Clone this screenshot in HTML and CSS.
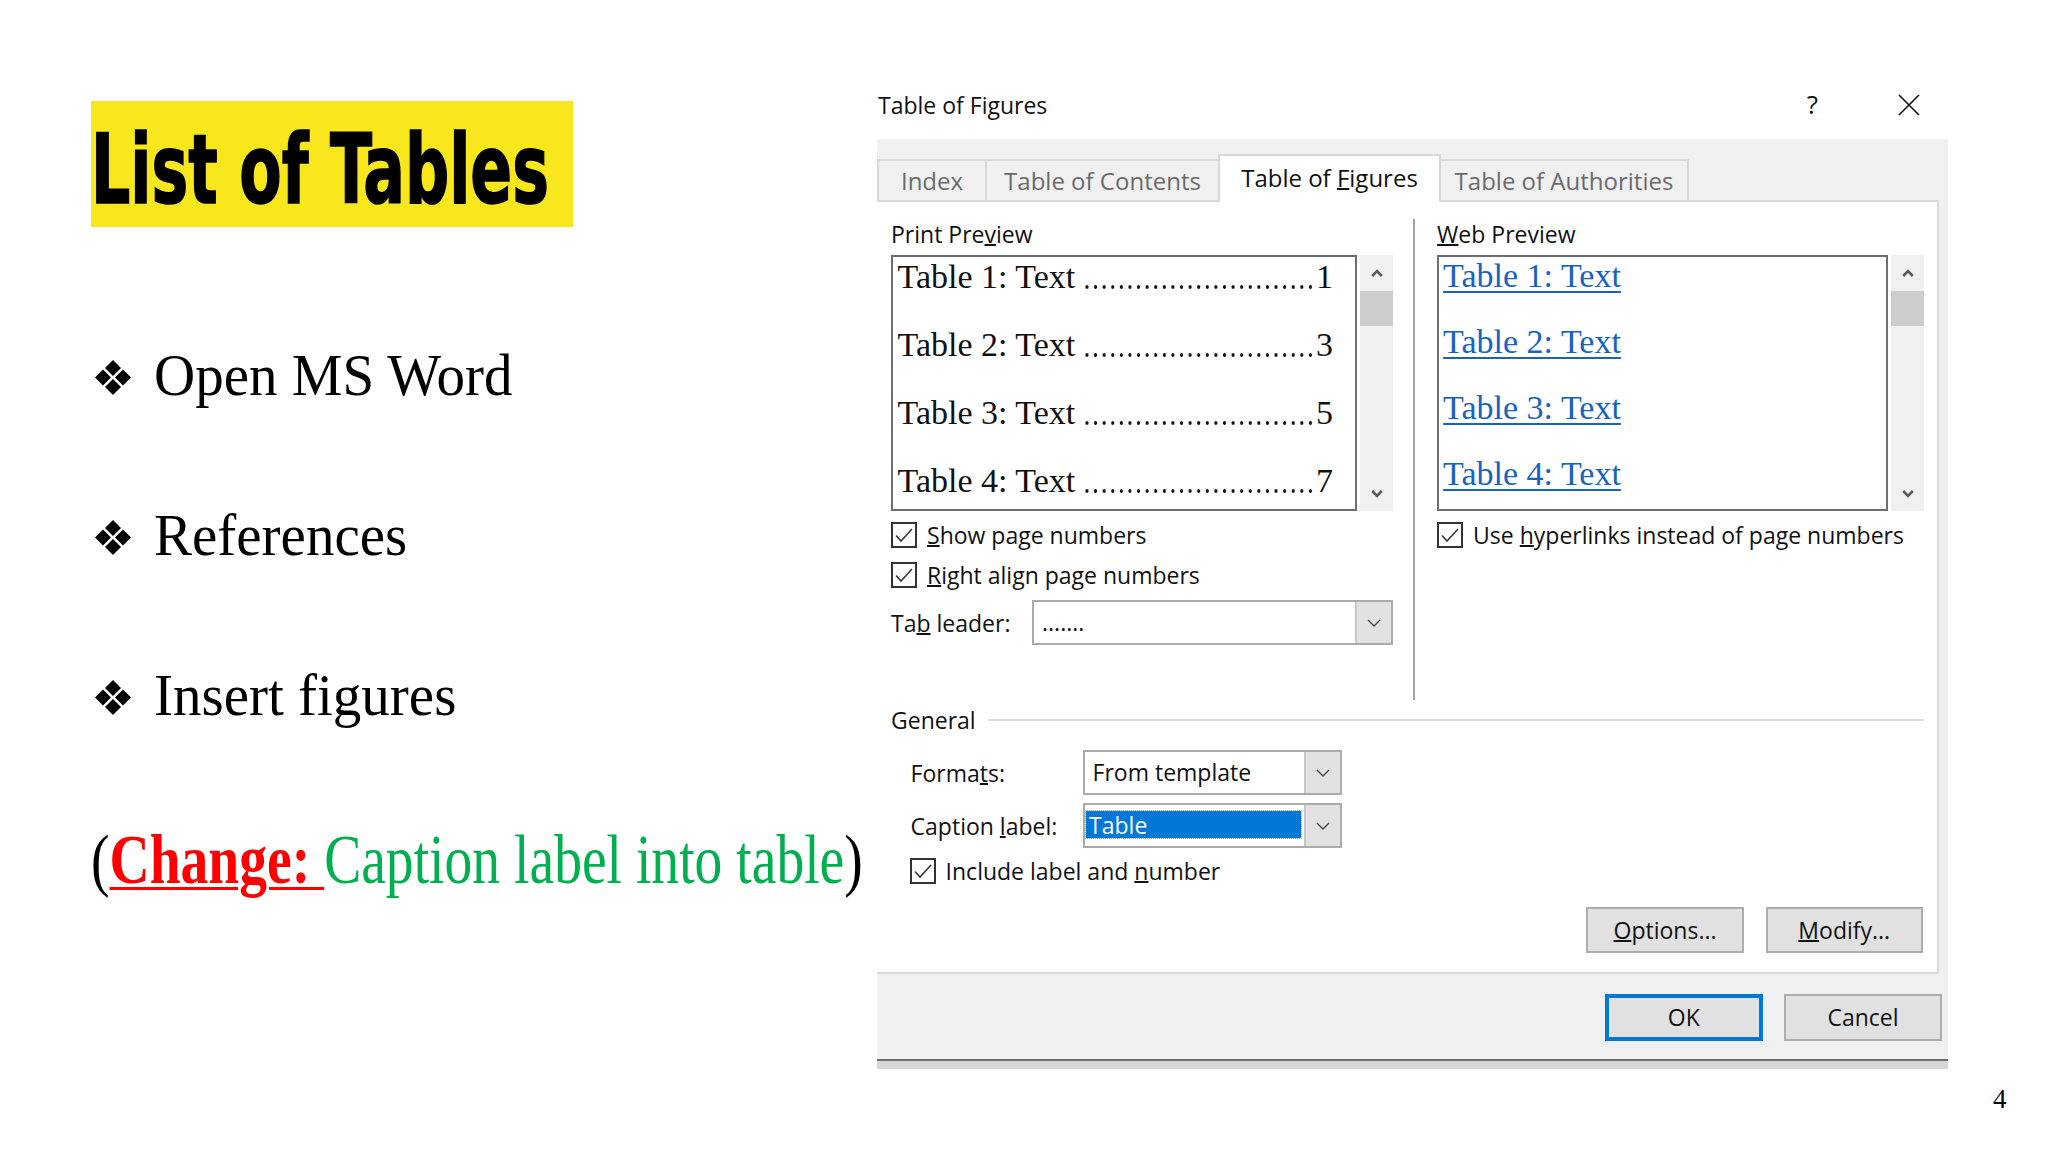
FILE: index.html
```html
<!DOCTYPE html>
<html lang="en">
<head>
    <meta charset="UTF-8">
    <title>List of Tables</title>
    <link rel="stylesheet" href="styles.css">
</head>
<body>

<svg class="defs" width="0" height="0">
    <symbol id="diamonds" viewBox="0 0 36 35">
        <polygon points="18,0 26,8 18,16 10,8"/>
        <polygon points="8,9.5 16,17.5 8,25.5 0,17.5"/>
        <polygon points="28,9.5 36,17.5 28,25.5 20,17.5"/>
        <polygon points="18,19 26,27 18,35 10,27"/>
    </symbol>
    <symbol id="tick" viewBox="0 0 26 26">
        <rect x="1" y="1" width="24" height="24" fill="#fff" stroke="#333" stroke-width="2"/>
        <path d="M5 13.5l5 5.5 11-12" fill="none" stroke="#3a3a3a" stroke-width="1.6"/>
    </symbol>
    <symbol id="chev-down" viewBox="0 0 14 8">
        <path d="M1 1l6 6 6-6" fill="none" stroke="#444" stroke-width="1.3"/>
    </symbol>
    <symbol id="scroll-up" viewBox="0 0 12 8">
        <path d="M1.2 7L6 2.2 10.8 7" fill="none" stroke="#5a5a5a" stroke-width="2.6"/>
    </symbol>
    <symbol id="scroll-down" viewBox="0 0 12 8">
        <path d="M1.2 1L6 5.8 10.8 1" fill="none" stroke="#5a5a5a" stroke-width="2.6"/>
    </symbol>
</svg>

<div class="slide">

    <div class="notes">
        <h1 class="title"><span>List of Tables</span></h1>

        <ul class="steps">
            <li><svg class="bullet"><use href="#diamonds"/></svg><span class="cond">Open MS Word</span></li>
            <li><svg class="bullet"><use href="#diamonds"/></svg><span class="cond">References</span></li>
            <li><svg class="bullet"><use href="#diamonds"/></svg><span class="cond">Insert figures</span></li>
        </ul>

        <p class="change"><span class="cond">(<span class="hl">Change: </span><span class="note">Caption label into table</span>)</span></p>
    </div>

    <div class="dialog">
        <div class="dlg-titlebar">
            <span class="dlg-title">Table of Figures</span>
            <span class="dlg-help">?</span>
            <svg class="dlg-close" width="22" height="22" viewBox="0 0 22 22"><path d="M1 1L21 21M21 1L1 21" stroke="#111" stroke-width="1.6"/></svg>
        </div>

        <div class="dlg-body">
            <div class="tabs">
                <div class="tab tab-index">Index</div>
                <div class="tab tab-toc">Table of Contents</div>
                <div class="tab tab-tof active">Table of <u>F</u>igures</div>
                <div class="tab tab-toa">Table of Authorities</div>
            </div>

            <div class="panel">
                <div class="pane-top">
                    <div class="col-print">
                        <div class="group-label">Print Pre<u>v</u>iew</div>
                        <div class="preview">
                            <div class="preview-box print">
                                <div class="toc-row"><span>Table 1: Text</span><span class="leader"></span><span>1</span></div>
                                <div class="toc-row"><span>Table 2: Text</span><span class="leader"></span><span>3</span></div>
                                <div class="toc-row"><span>Table 3: Text</span><span class="leader"></span><span>5</span></div>
                                <div class="toc-row"><span>Table 4: Text</span><span class="leader"></span><span>7</span></div>
                            </div>
                            <div class="scrollbar">
                                <div class="scroll-btn up"><svg width="12" height="8"><use href="#scroll-up"/></svg></div>
                                <div class="scroll-thumb"></div>
                                <div class="scroll-track"></div>
                                <div class="scroll-btn down"><svg width="12" height="8"><use href="#scroll-down"/></svg></div>
                            </div>
                        </div>

                        <div class="check first"><svg width="26" height="26"><use href="#tick"/></svg><span><u>S</u>how page numbers</span></div>
                        <div class="check"><svg width="26" height="26"><use href="#tick"/></svg><span><u>R</u>ight align page numbers</span></div>

                        <div class="leader-row">
                            <label>Ta<u>b</u> leader:</label>
                            <div class="select select-leader">
                                <span class="select-value">.......</span>
                                <span class="select-arrow"><svg width="14" height="8"><use href="#chev-down"/></svg></span>
                            </div>
                        </div>
                    </div>

                    <div class="vsep"></div>

                    <div class="col-web">
                        <div class="group-label"><u>W</u>eb Preview</div>
                        <div class="preview">
                            <div class="preview-box web">
                                <div class="toc-row"><a href="#">Table 1: Text</a></div>
                                <div class="toc-row"><a href="#">Table 2: Text</a></div>
                                <div class="toc-row"><a href="#">Table 3: Text</a></div>
                                <div class="toc-row"><a href="#">Table 4: Text</a></div>
                            </div>
                            <div class="scrollbar">
                                <div class="scroll-btn up"><svg width="12" height="8"><use href="#scroll-up"/></svg></div>
                                <div class="scroll-thumb"></div>
                                <div class="scroll-track"></div>
                                <div class="scroll-btn down"><svg width="12" height="8"><use href="#scroll-down"/></svg></div>
                            </div>
                        </div>

                        <div class="check first"><svg width="26" height="26"><use href="#tick"/></svg><span>Use <u>h</u>yperlinks instead of page numbers</span></div>
                    </div>
                </div>

                <div class="general">
                    <span>General</span>
                    <span class="rule"></span>
                </div>

                <div class="field first">
                    <label>Forma<u>t</u>s:</label>
                    <div class="select select-format">
                        <span class="select-value">From template</span>
                        <span class="select-arrow"><svg width="14" height="8"><use href="#chev-down"/></svg></span>
                    </div>
                </div>
                <div class="field">
                    <label>Caption <u>l</u>abel:</label>
                    <div class="select select-format">
                        <span class="select-value picked"><span class="picked-text">Table</span></span>
                        <span class="select-arrow"><svg width="14" height="8"><use href="#chev-down"/></svg></span>
                    </div>
                </div>

                <div class="check include"><svg width="26" height="26"><use href="#tick"/></svg><span>Include label and <u>n</u>umber</span></div>

                <div class="actions">
                    <button class="btn btn-options"><span><u>O</u>ptions...</span></button>
                    <button class="btn btn-modify"><span><u>M</u>odify...</span></button>
                </div>
            </div>

            <div class="dlg-footer">
                <button class="btn btn-ok">OK</button>
                <button class="btn btn-cancel">Cancel</button>
            </div>
        </div>
    </div>

    <span class="page-no">4</span>
</div>

</body>
</html>
```

FILE: styles.css
```css
body {
    margin: 0;
    background: #fff;
    color: #000;
    font-family: "Liberation Serif", "Times New Roman", serif;
}

.defs {
    position: absolute;
    width: 0;
    height: 0;
}

.slide {
    width: 2048px;
    height: 1152px;
    display: flex;
    align-items: flex-start;
    overflow: hidden;
}

/* left side of the slide */

.notes {
    flex: 0 0 877px;
    min-width: 0;
    box-sizing: border-box;
    padding: 101px 0 0 91px;
}

.title {
    width: 482px;
    height: 126px;
    box-sizing: border-box;
    margin: 0;
    padding-top: 21px;
    background: #f8e71c;
    font-family: "DejaVu Sans", sans-serif;
    font-stretch: condensed;
    font-weight: bold;
    font-size: 96px;
    line-height: 96px;
    white-space: nowrap;
}

.title span {
    display: inline-block;
    transform: scaleX(0.715);
    transform-origin: left center;
    -webkit-text-stroke: 1.5px #000;
}

.steps {
    list-style: none;
    margin: 67.7px 0 0;
    padding: 0 0 0 4px;
}

.steps li {
    font-size: 60px;
    line-height: 160px;
    white-space: nowrap;
}

.bullet {
    width: 36px;
    height: 35px;
    margin-right: 23px;
    fill: #000;
}

.cond {
    display: inline-block;
    line-height: 1;
    transform-origin: left center;
}

.steps .cond {
    transform: scaleX(0.95);
}

.change {
    margin: 35.7px 0 0;
    font-size: 70px;
    line-height: 100px;
    white-space: nowrap;
}

.change .cond {
    transform: scaleX(0.794);
}

.change .hl {
    color: #f00;
    font-weight: bold;
    text-decoration: underline;
    text-decoration-thickness: 3px;
    text-underline-offset: 4px;
}

.change .note {
    color: #00b050;
}

.page-no {
    align-self: flex-end;
    margin: 0 41.5px 38.6px auto;
    font-size: 27px;
    line-height: 27px;
}

/* dialog */

.dialog {
    flex: 0 0 1071px;
    margin-top: 80px;
    font-family: "Open Sans", "Noto Sans", sans-serif;
    font-size: 23px;
    color: #111;
}

.dialog u {
    text-decoration-thickness: 1.5px;
}

.dlg-titlebar {
    display: flex;
    height: 58.5px;
}

.dlg-title {
    margin: 14px 0 0 1px;
    font-size: 23px;
    line-height: 23px;
}

.dlg-help {
    margin: 10.9px 0 0 auto;
    font-size: 26px;
    line-height: 26px;
}

.dlg-close {
    margin: 14px 28.5px 0 79.5px;
}

.dlg-body {
    background: #f0f0f0;
    border-bottom: 2px solid #6f6f6f;
    box-shadow: 0 8px 0 #d6d6d6;
}

.tabs {
    display: flex;
    align-items: flex-end;
    padding-top: 15.5px;
}

.tab {
    box-sizing: border-box;
    height: 41.5px;
    margin-right: -2px;
    padding-top: 8.2px;
    border: 2px solid #d9d9d9;
    border-bottom: none;
    text-align: center;
    font-size: 24px;
    line-height: 24px;
    color: #6b6b6b;
    white-space: nowrap;
}

.tab.active {
    position: relative;
    height: 48px;
    margin-bottom: -2px;
    padding-top: 10.1px;
    background: #fff;
    color: #111;
}

.tab-index { width: 110px; }
.tab-toc { width: 235px; }
.tab-tof { width: 223px; }
.tab-toa { width: 250px; }

.panel {
    margin-right: 9.4px;
    padding: 17px 12.6px 18.6px 14px;
    background: #fff;
    border: 2px solid #dadada;
    border-left: none;
}

.pane-top {
    display: flex;
    height: 481px;
}

.col-print {
    width: 502px;
}

.col-web {
    flex: 1;
}

.vsep {
    width: 2px;
    background: #a3a3a3;
    margin: 0 22.5px 0 19.6px;
}

.group-label {
    margin-top: 1.6px;
    height: 26px;
    line-height: 26px;
}

.preview {
    display: flex;
    gap: 3px;
    margin-top: 8px;
    height: 256px;
}

.preview-box {
    flex: 1;
    box-sizing: border-box;
    display: flex;
    flex-direction: column;
    border: 2px solid #6f6f6f;
    background: #fff;
    font-family: "Liberation Serif", "Times New Roman", serif;
    font-size: 34px;
    white-space: nowrap;
    color: #111;
}

.preview-box.print {
    gap: 28px;
    padding: 0 22px 0 4.5px;
    line-height: 40px;
}

.preview-box.web {
    gap: 28px;
    padding: 0 0 0 4px;
    line-height: 38px;
}

.toc-row {
    display: flex;
}

/* dotted tab leader drawn as a repeating dot on the baseline */
.leader {
    flex: 1;
    margin: 0 1px 0 7px;
    background-image: radial-gradient(circle, #111 1.5px, transparent 2px);
    background-size: 8.6px 40px;
    background-position: right 0 top 10px;
    background-repeat: repeat-x;
}

.preview-box a {
    color: #1763c0;
    text-decoration: underline;
    text-decoration-thickness: 2px;
    text-underline-offset: 4px;
}

.scrollbar {
    width: 33px;
    display: flex;
    flex-direction: column;
    background: #f0f0f0;
}

.scroll-btn {
    display: flex;
    align-items: center;
    justify-content: center;
}

.scroll-btn.up { height: 36px; }
.scroll-btn.down { height: 34px; }

.scroll-thumb {
    height: 35px;
    background: #cdcdcd;
}

.scroll-track {
    flex: 1;
}

.check {
    display: flex;
    align-items: center;
    gap: 10px;
    height: 26px;
    line-height: 26px;
    margin-top: 14px;
    white-space: nowrap;
}

.check.first {
    margin-top: 11.2px;
}

.check.include {
    margin: 10px 0 0 18.6px;
}

.check svg {
    flex: 0 0 26px;
}

.leader-row {
    display: flex;
    align-items: center;
    margin-top: 12px;
}

.leader-row label {
    width: 141px;
    line-height: 26px;
}

.select {
    box-sizing: border-box;
    display: flex;
    border: 2px solid #ababab;
    background: #fff;
}

.select-leader {
    width: 361px;
    height: 45.5px;
}

.select-format {
    width: 259.5px;
    height: 45px;
}

.select-value {
    flex: 1;
    padding-left: 8px;
    line-height: 41px;
    white-space: nowrap;
}

.select-value.picked {
    padding: 0;
}

.picked-text {
    display: block;
    margin: 5.7px 3.6px 0 1.5px;
    padding-left: 3px;
    height: 27px;
    line-height: 28px;
    background: #0078d7;
    color: #fff;
    outline: 1px dotted #e6a23c;
}

.select-arrow {
    box-sizing: border-box;
    width: 36px;
    display: flex;
    align-items: center;
    justify-content: center;
    background: #e2e2e2;
    border-left: 2px solid #c8c8c8;
}

.general {
    display: flex;
    align-items: center;
    height: 26px;
    line-height: 26px;
    margin-top: 7px;
}

.general .rule {
    flex: 1;
    height: 2px;
    margin-left: 12px;
    background: #dcdcdc;
}

.field {
    display: flex;
    align-items: center;
    margin: 8px 0 0 19.6px;
}

.field.first {
    margin-top: 17px;
}

.field label {
    width: 172px;
    line-height: 26px;
}

.actions {
    display: flex;
    justify-content: flex-end;
    gap: 22px;
    margin: 23px 1.5px 0 0;
}

.btn {
    box-sizing: border-box;
    height: 46px;
    padding: 0;
    display: flex;
    align-items: center;
    justify-content: center;
    border: 2px solid #adadad;
    background: #e1e1e1;
    font-family: inherit;
    font-size: 23px;
    color: #111;
}

.btn-options { width: 158px; }
.btn-modify { width: 156.5px; }

.dlg-footer {
    display: flex;
    justify-content: flex-end;
    gap: 21.5px;
    padding: 20.4px 6px 18px 0;
}

.btn-ok {
    width: 157.5px;
    height: 47px;
    border: 4px solid #0078d7;
}

.btn-cancel {
    width: 158px;
    height: 47px;
}
```
